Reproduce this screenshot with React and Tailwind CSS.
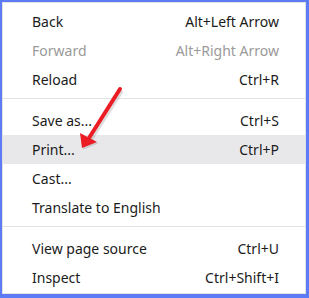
import React from "react";

const items = [
  { label: "Back", key: "Alt+Left Arrow" },
  { label: "Forward", key: "Alt+Right Arrow", disabled: true },
  { label: "Reload", key: "Ctrl+R" },
  "sep",
  { label: "Save as...", key: "Ctrl+S" },
  { label: "Print...", key: "Ctrl+P", active: true },
  { label: "Cast..." },
  { label: "Translate to English" },
  "sep",
  { label: "View page source", key: "Ctrl+U" },
  { label: "Inspect", key: "Ctrl+Shift+I" },
];

const Arrow = () => (
  <svg
    className="absolute left-0 top-0 pointer-events-none"
    width="309"
    height="298"
    viewBox="0 0 309 298"
  >
    <line x1="120" y1="89" x2="89" y2="138" stroke="#7a7a7a" strokeOpacity="0.25" strokeWidth="5" transform="translate(1.5 1.5)" />
    <polygon points="82,148 80,133 97,142" fill="#7a7a7a" fillOpacity="0.25" transform="translate(1.5 1.5)" />
    <line x1="120" y1="89" x2="89" y2="138" stroke="#ec1c24" strokeWidth="4" strokeLinecap="round" />
    <polygon points="82,148 80,133 97,142" fill="#ec1c24" />
  </svg>
);

export default function App() {
  return (
    <div
      className="relative w-[309px] h-[298px] bg-[#5b7cf6] pl-[2px] pt-[2px] pr-[3px] pb-[4px]"
      style={{ fontFamily: '"Noto Sans", "Open Sans", sans-serif' }}
    >
      <div className="h-full bg-white border border-[#e2e2e2] pt-[4px] text-[14px] text-[#1b1b1b]">
        {items.map((it, i) =>
          it === "sep" ? (
            <div key={i} className="pt-[4px] pb-[7px]">
              <div className="h-px bg-[#e3e3e3]" />
            </div>
          ) : (
            <div
              key={i}
              className={
                "h-[29px] flex items-center justify-between pl-[29px] pr-[26px] " +
                (it.active ? "bg-[#e8e8eb] " : "") +
                (it.disabled ? "text-[#9a9a9a]" : "")
              }
            >
              <span>{it.label}</span>
              {it.key && <span>{it.key}</span>}
            </div>
          )
        )}
      </div>
      <Arrow />
    </div>
  );
}
